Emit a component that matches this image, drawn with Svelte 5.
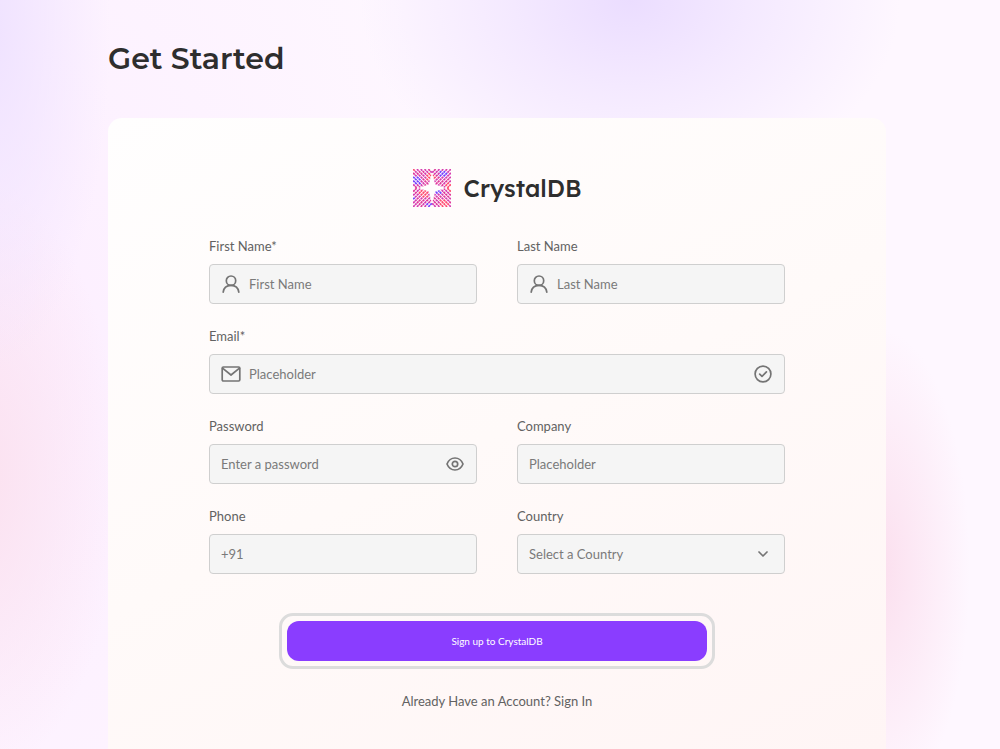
<script lang="ts">
	type Dash = { x: number; y: number; slope: number; fill: string };

	const CELLS = 20;
	const COLORS = ['#d63bb0', '#7440ff', '#ff4a70', '#e0379a'];

	let firstName = $state('');
	let lastName = $state('');
	let email = $state('');
	let password = $state('');
	let company = $state('');
	let phone = $state('');
	let country = $state('');
	let showPassword = $state(false);

	function pickColor(x: number, y: number) {
		const wave = Math.sin(x * 0.5 + y * 0.2) + Math.cos(y * 0.6 - x * 0.3);
		if (wave > 1.25) return COLORS[1];
		if (wave < -1.1) return COLORS[2];
		return Math.abs(wave) < 0.35 ? COLORS[3] : COLORS[0];
	}

	// diagonal dashes that run outwards from the centre in each quadrant
	function buildDashes(): Dash[] {
		const dashes: Dash[] = [];
		const mid = (CELLS - 1) / 2;
		for (let row = 0; row < CELLS; row++) {
			for (let col = 0; col < CELLS; col++) {
				const x = col - mid;
				const y = row - mid;
				if (Math.round(Math.abs(x) - Math.abs(y)) % 2 !== 0) continue;
				dashes.push({ x: col + 0.5, y: row + 0.5, slope: x * y > 0 ? 0.42 : -0.42, fill: pickColor(x, y) });
			}
		}
		return dashes;
	}

	const dashes = buildDashes();
</script>

{#snippet userIcon()}
	<svg class="icon" viewBox="0 0 20 20" aria-hidden="true">
		<circle cx="10" cy="6.7" r="4.7" />
		<path d="M2.200 18.200C2.700 14 5.800 11.400 10 11.400s7.300 2.600 7.800 6.800" />
	</svg>
{/snippet}

<main class="page">
	<h1>Get Started</h1>

	<section class="card">
		<div class="brand">
			<svg class="logo" viewBox="0 0 20 20" aria-hidden="true">
				{#each dashes as dash}
					<line
						x1={dash.x - 0.42}
						y1={dash.y - dash.slope}
						x2={dash.x + 0.42}
						y2={dash.y + dash.slope}
						stroke={dash.fill}
						stroke-width="0.92"
					/>
				{/each}
				<path d="M10 1.800 11.700 8.100 17.200 10 11.700 11.900 10 18.200 8.300 11.900 2.800 10 8.300 8.100Z" fill="#fffdfd" />
			</svg>
			<span>CrystalDB</span>
		</div>

		<form onsubmit={(event) => event.preventDefault()}>
			<div class="fields">
				<div class="field">
					<label for="first-name">First Name*</label>
					<div class="control">
						{@render userIcon()}
						<input id="first-name" type="text" placeholder="First Name" bind:value={firstName} />
					</div>
				</div>

				<div class="field">
					<label for="last-name">Last Name</label>
					<div class="control">
						{@render userIcon()}
						<input id="last-name" type="text" placeholder="Last Name" bind:value={lastName} />
					</div>
				</div>

				<div class="field wide">
					<label for="email">Email*</label>
					<div class="control">
						<svg class="icon" viewBox="0 0 20 20" aria-hidden="true">
							<rect x="1.200" y="3" width="17.600" height="14" rx="1.200" />
							<path d="M1.500 4.200 10 11l8.500-6.800" />
						</svg>
						<input id="email" type="email" placeholder="Placeholder" bind:value={email} />
						<svg class="icon" viewBox="0 0 20 20" aria-hidden="true">
							<circle cx="10" cy="10" r="7.900" />
							<path d="m6.700 10.200 2.300 2.200 4.400-4.500" />
						</svg>
					</div>
				</div>

				<div class="field">
					<label for="password">Password</label>
					<div class="control">
						<input
							id="password"
							type={showPassword ? 'text' : 'password'}
							placeholder="Enter a password"
							bind:value={password}
						/>
						<button
							type="button"
							class="reveal"
							aria-label="Show password"
							onclick={() => (showPassword = !showPassword)}
						>
							<svg class="icon" viewBox="0 0 20 20" aria-hidden="true">
								<path d="M2 10c1.500-3.700 4.500-6 8-6s6.500 2.300 8 6c-1.500 3.700-4.500 6-8 6s-6.500-2.300-8-6Z" />
								<circle cx="10" cy="10" r="2.700" />
							</svg>
						</button>
					</div>
				</div>

				<div class="field">
					<label for="company">Company</label>
					<div class="control">
						<input id="company" type="text" placeholder="Placeholder" bind:value={company} />
					</div>
				</div>

				<div class="field">
					<label for="phone">Phone</label>
					<div class="control">
						<input id="phone" type="tel" placeholder="+91" bind:value={phone} />
					</div>
				</div>

				<div class="field">
					<label for="country">Country</label>
					<div class="control">
						<select id="country" bind:value={country}>
							<option value="">Select a Country</option>
							<option value="in">India</option>
							<option value="us">United States</option>
							<option value="gb">United Kingdom</option>
						</select>
						<svg class="icon chevron" viewBox="0 0 20 20" aria-hidden="true">
							<path d="m6 8 4 4 4-4" />
						</svg>
					</div>
				</div>
			</div>

			<div class="submit-frame">
				<button type="submit" class="submit">Sign up to CrystalDB</button>
			</div>
		</form>

		<p class="signin">Already Have an Account? <a href="/signin">Sign In</a></p>
	</section>
</main>

<style>
	:global(body) {
		margin: 0;
		background: #fdf7ff;
	}

	.page {
		box-sizing: border-box;
		display: flex;
		flex-direction: column;
		min-height: 100vh;
		padding: 37px 114px 0 108px;
		font-family: Lato, 'Liberation Sans', sans-serif;
		color: #626262;
		background:
			radial-gradient(ellipse 270px 200px at 63% 0%, #ebddff 0%, rgba(241, 229, 255, 0.75) 45%, rgba(253, 245, 255, 0) 100%),
			radial-gradient(ellipse 120px 340px at -1% 4%, #efe2ff 0%, rgba(250, 236, 255, 0) 100%),
			radial-gradient(ellipse 140px 300px at -2% 64%, #fbe1ef 0%, rgba(252, 236, 250, 0) 100%),
			radial-gradient(ellipse 90px 240px at 88% 76%, #fbdfee 0%, rgba(253, 243, 255, 0) 100%),
			radial-gradient(ellipse 460px 760px at 0% 50%, #fceeff 0%, rgba(254, 246, 255, 0) 100%),
			#fef7ff;
	}

	h1 {
		margin: 0 0 37px;
		font-family: Montserrat, Inter, sans-serif;
		font-size: 30px;
		font-weight: 600;
		line-height: 44px;
		color: #2e2e2e;
	}

	.card {
		flex: 1;
		display: flex;
		flex-direction: column;
		align-items: center;
		padding: 51px 24px 38px;
		border-radius: 14px 14px 0 0;
		background: linear-gradient(155deg, #fffefe 0%, #fffaf9 50%, #fff5f5 100%);
	}

	.brand {
		display: flex;
		align-items: center;
		gap: 13px;
		margin-bottom: 29px;
		font-family: Lexend, Nunito, Lato, sans-serif;
		font-size: 24px;
		font-weight: 500;
		line-height: 38px;
		color: #2e2e2e;
	}

	.logo {
		width: 38px;
		height: 38px;
	}

	form {
		display: flex;
		flex-direction: column;
		align-items: center;
		width: 100%;
		max-width: 576px;
	}

	.fields {
		display: grid;
		grid-template-columns: 1fr 1fr;
		gap: 22px 40px;
		width: 100%;
	}

	.field {
		display: grid;
		gap: 8px;
		min-width: 0;
	}

	.wide {
		grid-column: 1 / -1;
	}

	label {
		font-size: 13px;
		line-height: 20px;
	}

	.control {
		box-sizing: border-box;
		display: flex;
		align-items: center;
		gap: 8px;
		height: 40px;
		padding: 0 11px;
		border: 1px solid #cfcfcf;
		border-radius: 4px;
		background: #f5f5f5;
	}

	input,
	select {
		flex: 1;
		min-width: 0;
		height: 100%;
		padding: 0;
		border: 0;
		outline: 0;
		background: transparent;
		font: inherit;
		font-size: 13px;
		color: #7a7a7a;
		appearance: none;
	}

	input::placeholder {
		color: #7a7a7a;
		opacity: 1;
	}

	.icon {
		flex: none;
		display: block;
		width: 20px;
		height: 20px;
		fill: none;
		stroke: #747474;
		stroke-width: 1.7;
		stroke-linecap: round;
		stroke-linejoin: round;
	}

	.chevron {
		pointer-events: none;
	}

	button {
		border: 0;
		font-family: inherit;
		cursor: pointer;
	}

	.reveal {
		padding: 0;
		background: transparent;
	}

	.submit-frame {
		box-sizing: border-box;
		width: 100%;
		max-width: 436px;
		margin-top: 39px;
		padding: 5px;
		border: 3px solid #dcdcdc;
		border-radius: 14px;
	}

	.submit {
		display: block;
		width: 100%;
		height: 40px;
		border-radius: 12px;
		background: #8a3dff;
		font-size: 10px;
		color: #fff;
	}

	.signin {
		margin: 22px 0 0;
		font-size: 13px;
		line-height: 20px;
	}

	.signin a {
		color: inherit;
		text-decoration: none;
	}
</style>
